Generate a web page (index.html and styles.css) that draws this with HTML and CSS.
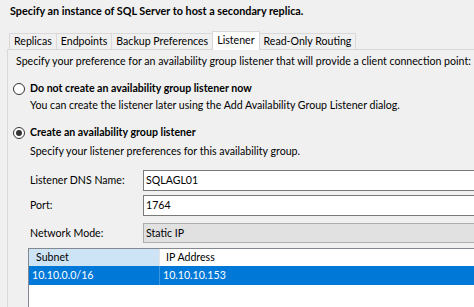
FILE: index.html
```html
<!DOCTYPE html>
<html>
<head>
<meta charset="utf-8">
<link rel="stylesheet" href="styles.css">
</head>
<body>
<div class="header">Specify an instance of SQL Server to host a secondary replica.</div>
<div class="tabs">
  <div class="tab">Replicas</div>
  <div class="tab">Endpoints</div>
  <div class="tab">Backup Preferences</div>
  <div class="tab selected">Listener</div>
  <div class="tab">Read-Only Routing</div>
</div>
<div class="page">
  <div class="intro">Specify your preference for an availability group listener that will provide a client connection point:</div>
  <div class="option first">
    <span class="radio"></span>
    <span class="opt-label">Do not create an availability group listener now</span>
  </div>
  <div class="desc d1">You can create the listener later using the Add Availability Group Listener dialog.</div>
  <div class="option second">
    <span class="radio checked"></span>
    <span class="opt-label">Create an availability group listener</span>
  </div>
  <div class="desc d2">Specify your listener preferences for this availability group.</div>
  <div class="form">
    <div class="row r1">
      <span class="label">Listener DNS Name:</span>
      <span class="input">SQLAGL01</span>
    </div>
    <div class="row r2">
      <span class="label">Port:</span>
      <span class="input">1764</span>
    </div>
    <div class="row r3">
      <span class="label">Network Mode:</span>
      <span class="combo">Static IP</span>
    </div>
    <div class="grid">
      <div class="grow head">
        <span class="cell c1">Subnet</span>
        <span class="cell c2">IP Address</span>
      </div>
      <div class="grow sel">
        <span class="cell c1">10.10.0.0/16</span>
        <span class="cell c2">10.10.10.153</span>
      </div>
    </div>
  </div>
</div>
</body>
</html>
```
FILE: styles.css
```css
html, body {
  margin: 0;
  padding: 0;
}
body {
  width: 474px;
  height: 307px;
  overflow: hidden;
  background: #f0f0f0;
  font-family: "Lato", "Noto Sans", sans-serif;
  font-size: 10.6px;
  color: #000;
}
.header {
  height: 31px;
  box-sizing: border-box;
  padding: 3px 0 0 10px;
  line-height: 16px;
  font-size: 10.8px;
  font-weight: bold;
  white-space: nowrap;
}
.tabs {
  display: flex;
  align-items: flex-end;
  height: 18px;
  padding-left: 9px;
  position: relative;
  z-index: 1;
}
.tab {
  height: 16px;
  box-sizing: border-box;
  padding: 0 4px;
  line-height: 15px;
  border: 1px solid #d9d9d9;
  border-bottom: none;
  background: #f0f0f0;
  margin-right: -1px;
  white-space: nowrap;
}
.tab.selected {
  height: 19px;
  margin-bottom: -1px;
  background: #fff;
  padding: 0 4px;
  line-height: 16px;
}
.page {
  margin-left: 7px;
  margin-right: -10px;
  height: 300px;
  border: 1px solid #d9d9d9;
  background: #f0f0f0;
  padding-top: 3px;
}
.intro {
  margin-left: 8px;
  line-height: 16px;
  white-space: nowrap;
}
.option {
  display: flex;
  align-items: center;
  height: 16px;
  font-weight: bold;
  white-space: nowrap;
}
.option.first { margin-top: 11px; }
.option.second { margin-top: 11px; }
.radio {
  width: 12px;
  height: 12px;
  box-sizing: border-box;
  border: 1px solid #333;
  border-radius: 50%;
  background: #fff;
  margin: 2px 5px 0 5px;
  display: flex;
  align-items: center;
  justify-content: center;
}
.radio.checked::after {
  content: "";
  width: 6px;
  height: 6px;
  border-radius: 50%;
  background: #333;
}
.desc {
  margin-left: 22px;
  line-height: 16px;
  white-space: nowrap;
}
.desc.d1 { margin-top: 1px; }
.desc.d2 { margin-top: 3px; }
.form {
  margin-left: 20px;
  margin-top: 11px;
}
.row {
  display: flex;
  height: 21px;
}
.row.r2 { margin-top: 4px; }
.row.r3 {
  margin-top: 7px;
  height: 20px;
}
.label {
  width: 115px;
  flex: none;
  box-sizing: border-box;
  padding-left: 2px;
  line-height: 21px;
  white-space: nowrap;
}
.r3 .label { line-height: 20px; }
.input, .combo {
  flex: 1;
  box-sizing: border-box;
  border: 1px solid #7a7a7a;
  background: #fff;
  padding-left: 2px;
  line-height: 19px;
}
.combo {
  background: #e1e1e1;
  border-color: #adadad;
  line-height: 18px;
}
.grid {
  margin-top: 5px;
  height: 80px;
  border: 1px solid #828790;
  background: #fff;
}
.grow {
  display: flex;
}
.grow.head { height: 17px; }
.grow.sel {
  height: 19px;
  background: #0078d7;
  color: #fff;
}
.cell {
  box-sizing: border-box;
  line-height: 17px;
  white-space: nowrap;
}
.cell.c1 {
  width: 131px;
  border-right: 1px solid #e5e5e5;
}
.cell.c2 { flex: 1; }
.head .cell.c1 {
  padding-left: 7px;
  background: #cde4f7;
}
.head .cell.c2 { padding-left: 6px; }
.sel .cell { line-height: 19px; }
.sel .cell.c1 {
  padding-left: 3px;
  border-right-color: #3d96df;
}
.sel .cell.c2 { padding-left: 3px; }
```
